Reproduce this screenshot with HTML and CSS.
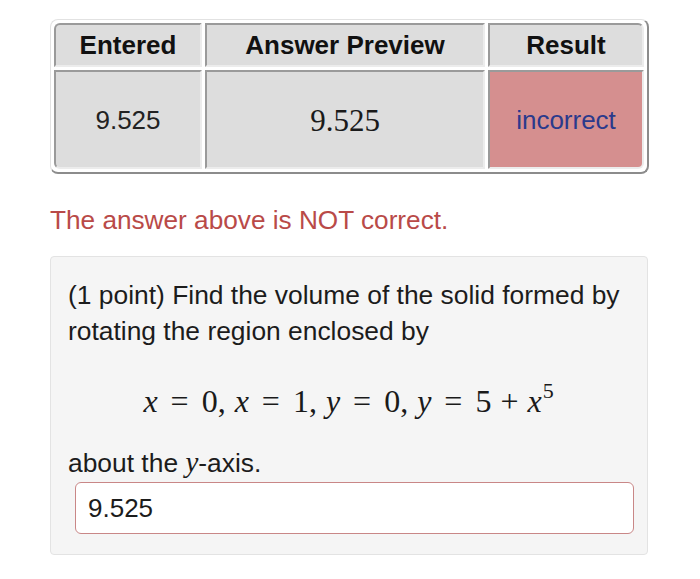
FILE: index.html
```html
<!DOCTYPE html>
<html>
<head>
<meta charset="utf-8">
<link rel="stylesheet" href="styles.css">
</head>
<body>
<div class="page">
  <table class="attempt">
    <tr class="head">
      <th class="c1 tl">Entered</th>
      <th class="c2">Answer Preview</th>
      <th class="c3 tr">Result</th>
    </tr>
    <tr class="body">
      <td class="c1 bl">9.525</td>
      <td class="c2 preview">9.525</td>
      <td class="c3 br wrong">incorrect</td>
    </tr>
  </table>

  <p class="msg">The answer above is NOT correct.</p>

  <div class="well">
    <p class="text">(1 point) Find the volume of the solid formed by rotating the region enclosed by</p>
    <div class="math"><span class="mi">x</span><span class="mo">=</span><span class="mn">0</span><span class="mp">,</span><span class="mi">x</span><span class="mo">=</span><span class="mn">1</span><span class="mp">,</span><span class="mi">y</span><span class="mo">=</span><span class="mn">0</span><span class="mp">,</span><span class="mi">y</span><span class="mo">=</span><span class="mn">5</span><span class="mb">+</span><span class="mi">x</span><sup class="sup">5</sup></div>
    <p class="text">about the <span class="var">y</span>-axis.</p>
    <input class="answer" type="text" value="9.525">
  </div>
</div>
</body>
</html>
```

FILE: styles.css
```css
html, body {
  margin: 0;
  padding: 0;
  background: #ffffff;
}

.page {
  padding: 19px 0 0 50px;
  width: 598px;
  font-family: "Liberation Sans", Arial, sans-serif;
  color: #1c1c1c;
}

.attempt {
  border-collapse: separate;
  border-spacing: 3px;
  border-style: solid;
  border-width: 1px 2px 2px 1px;
  border-color: #e2e2e2 #8c8c8c #8c8c8c #e2e2e2;
  border-radius: 8px;
  table-layout: fixed;
  width: 598px;
}

.attempt th,
.attempt td {
  box-sizing: border-box;
  border-style: solid;
  border-width: 2px;
  border-color: #9a9a9a #ececec #ececec #9a9a9a;
  background: #dddddd;
  text-align: center;
  vertical-align: middle;
  padding: 0;
  font-size: 26px;
}

.attempt th {
  height: 44px;
  font-weight: bold;
  color: #111111;
}

.attempt td {
  height: 99px;
  padding-top: 2px;
  color: #222222;
}

.c1 { width: 148px; }
.c2 { width: 280px; }
.c3 { width: 156px; }

.tl { border-top-left-radius: 6px; }
.tr { border-top-right-radius: 6px; }
.bl { border-bottom-left-radius: 6px; }
.br { border-bottom-right-radius: 6px; }

.attempt td.preview {
  font-family: "Liberation Serif", "Times New Roman", serif;
  font-size: 31px;
  color: #1a1a1a;
}

.attempt td.wrong {
  background: #d58f8f;
  color: #2b3a8c;
}

.msg {
  margin: 31px 0 0 0;
  font-size: 26.2px;
  line-height: 30px;
  color: #b94a48;
}

.well {
  margin-top: 21px;
  box-sizing: border-box;
  width: 598px;
  background: #f5f5f5;
  border: 1px solid #e3e3e3;
  border-radius: 4px;
  padding: 20px 18px 20px 17px;
}

.text {
  margin: 0;
  font-size: 26.4px;
  line-height: 36px;
  color: #1c1c1c;
}

.var {
  font-family: "Liberation Serif", "Times New Roman", serif;
  font-style: italic;
  font-size: 29px;
}

.math {
  margin: 32px 0 23px 0;
  height: 40px;
  line-height: 40px;
  text-align: center;
  font-family: "Liberation Serif", "Times New Roman", serif;
  font-size: 32px;
  color: #1a1a1a;
}

.mi { font-style: italic; }
.mo { margin: 0 13px; }
.mb { margin: 0 9px; }
.mp { margin-right: 9px; }

.sup {
  font-size: 22px;
  line-height: 0;
  vertical-align: 14px;
  margin-left: 1px;
}

.answer {
  display: block;
  box-sizing: border-box;
  margin: 1px 0 0 7px;
  width: 559px;
  height: 52px;
  border: 1px solid #c98787;
  border-radius: 6px;
  background: #ffffff;
  padding: 0 0 0 12px;
  font-family: "Liberation Sans", Arial, sans-serif;
  font-size: 26px;
  color: #1c1c1c;
  outline: none;
}
```
